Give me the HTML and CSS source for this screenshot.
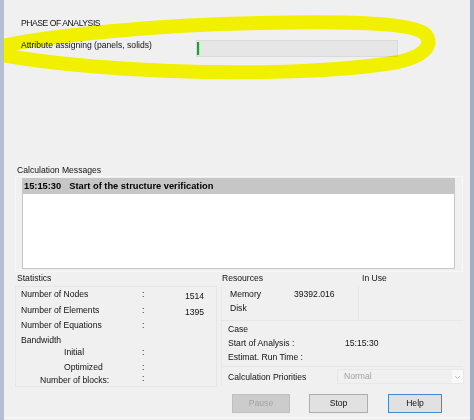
FILE: index.html
```html
<!DOCTYPE html>
<html>
<head>
<meta charset="utf-8">
<link rel="stylesheet" href="styles.css">
</head>
<body>
<div class="window">
  <div class="phase">
    <div class="phase-title">PHASE OF ANALYSIS</div>
    <div class="phase-row">
      <span>Attribute assigning (panels, solids)</span>
      <div class="progress"><div class="progress-fill" style="width:2px"></div></div>
    </div>
  </div>

  <div class="messages">
    <div class="group-label">Calculation Messages</div>
    <div class="msg-frame">
      <div class="listbox">
        <div class="list-item selected"><span>15:15:30</span><span>Start of the structure verification</span></div>
      </div>
    </div>
  </div>

  <div class="bottom">
    <div class="stats">
      <div class="group-label">Statistics</div>
      <div class="stats-panel">
        <div class="stat-row h155"><span>Number of Nodes</span><span>:</span><span class="val">1514</span></div>
        <div class="stat-row h15"><span>Number of Elements</span><span>:</span><span class="val">1395</span></div>
        <div class="stat-row h15"><span>Number of Equations</span><span>:</span><span class="val"></span></div>
        <div class="stat-row h12"><span>Bandwidth</span><span></span><span class="val"></span></div>
        <div class="stat-row h15"><span class="ind2">Initial</span><span>:</span><span class="val"></span></div>
        <div class="stat-row h135"><span class="ind2">Optimized</span><span>:</span><span class="val"></span></div>
        <div class="stat-row"><span class="ind1">Number of blocks:</span><span class="colon-up">:</span><span class="val"></span></div>
      </div>
    </div>

    <div class="right">
      <div class="res-head"><span class="res-title">Resources</span><span class="inuse-title">In Use</span></div>
      <div class="res-row">
        <div class="res-panel">
          <div class="kv mem"><span>Memory</span><span>39392.016</span></div>
          <div class="kv"><span>Disk</span><span></span></div>
        </div>
        <div class="inuse-panel"></div>
      </div>
      <div class="case-panel">
        <div class="case-line">Case</div>
        <div class="case-line case-kv"><span>Start of Analysis :</span><span>15:15:30</span></div>
        <div class="case-line">Estimat. Run Time :</div>
      </div>
      <div class="prio-row">
        <span class="prio-label">Calculation Priorities</span>
        <div class="combo">
          <span class="combo-text">Normal</span>
          <span class="combo-arrow"><svg width="11" height="12" viewBox="0 0 11 12"><polyline points="3,5 5.5,7.5 8,5" fill="none" stroke="#c4c4c4" stroke-width="1"/></svg></span>
        </div>
      </div>
    </div>
  </div>

  <div class="buttons">
    <div class="btn disabled w58">Pause</div>
    <div class="btn w59">Stop</div>
    <div class="btn default w54">Help</div>
  </div>
  <div class="bottom-line"></div>

  <svg class="highlight" width="474" height="100" viewBox="0 0 474 100">
    <path d="M 2,46 C 50,36 150,25 260,23 C 350,21 416,23 426,35 C 434,46 422,57 398,62 C 340,72 250,74 170,71 C 100,68 40,62 2,55" fill="none" stroke="#ffff00" stroke-width="14" stroke-linecap="round" stroke-linejoin="round"/>
  </svg>
</div>
</body>
</html>
```
FILE: styles.css
```css
html, body {
  margin: 0;
  padding: 0;
  background: #f0f0f0;
}
body {
  font-family: "Liberation Sans", Arial, sans-serif;
  font-size: 8.6px;
  line-height: 11px;
  color: #111;
}
.window {
  position: relative;
  width: 474px;
  height: 420px;
  box-sizing: border-box;
  border-left: 4px solid #b3bfd3;
  border-right: 4px solid #a4aec3;
  background: #f0f0f0;
  display: flex;
  flex-direction: column;
  overflow: hidden;
}
.phase {
  padding: 18px 0 0 17px;
}
.phase-title {
  letter-spacing: -0.45px;
}
.phase-row {
  display: grid;
  grid-template-columns: 175px 202px;
  margin-top: 11px;
}
.progress {
  height: 17px;
  box-sizing: border-box;
  background: #e6e6e6;
  border: 1px solid #dadada;
  padding: 1px 0;
  display: flex;
}
.progress-fill {
  background: #06b025;
  height: 100%;
}
.messages {
  margin-top: 108px;
  padding-left: 11px;
}
.group-label {
  padding-left: 2px;
}
.msg-frame {
  width: 448px;
  box-sizing: border-box;
  border: 1px solid #f7f7f7;
  padding: 1px 7px 2px 6px;
}
.listbox {
  height: 91px;
  box-sizing: border-box;
  border: 1px solid #c6c6c6;
  background: #fff;
}
.list-item.selected {
  background: #c6c6c6;
  height: 15px;
  box-sizing: border-box;
  padding: 1px 0 0 1px;
  font-weight: bold;
  font-size: 9.3px;
  line-height: 12px;
  display: flex;
  gap: 8px;
  color: #000;
}
.bottom {
  display: grid;
  grid-template-columns: 202px 242px;
  column-gap: 4px;
  margin: 1px 0 0 11px;
}
.stats-panel {
  margin-top: 2px;
  height: 101px;
  box-sizing: border-box;
  border: 1px solid #e6e6e6;
  padding: 2px 0 0 5px;
}
.stat-row {
  display: grid;
  grid-template-columns: 121px 6px 56px;
  height: 11px;
}
.stat-row.h155 { height: 15.5px; }
.stat-row.h15 { height: 15px; }
.stat-row.h12 { height: 12px; }
.stat-row.h135 { height: 13.5px; }
.stat-row .val {
  text-align: right;
  padding-top: 2px;
}
.ind2 { padding-left: 43px; }
.ind1 { padding-left: 19px; }
.colon-up { margin-top: -2px; }
.res-head {
  display: grid;
  grid-template-columns: 137px 105px;
}
.res-title { padding-left: 1px; }
.inuse-title { padding-left: 4px; }
.res-row {
  display: grid;
  grid-template-columns: 137px 105px;
  height: 34px;
  margin-top: 2px;
}
.res-panel {
  border-left: 1px solid #e6e6e6;
  padding: 3px 0 0 8px;
}
.kv {
  display: grid;
  grid-template-columns: 64px auto;
}
.kv.mem { height: 13.5px; }
.inuse-panel {
  border-left: 1px solid #e6e6e6;
}
.case-panel {
  height: 47px;
  box-sizing: border-box;
  border-top: 1px solid #e6e6e6;
  border-bottom: 1px solid #e6e6e6;
  border-left: 1px solid #e6e6e6;
  padding: 2.5px 0 0 6px;
}
.case-line { height: 14px; }
.case-kv {
  display: grid;
  grid-template-columns: 117px auto;
}
.prio-row {
  display: grid;
  grid-template-columns: 108px 127px;
  padding-left: 7px;
  height: 20px;
  border-left: 1px solid #e6e6e6;
  box-sizing: border-box;
}
.prio-label {
  padding-top: 5px;
  margin-left: -1px;
}
.combo {
  margin-top: 2px;
  height: 15px;
  box-sizing: border-box;
  border: 1px solid #e8e8e8;
  display: flex;
  justify-content: space-between;
  color: #a3a3a3;
}
.combo-text {
  padding: 1px 0 0 6px;
}
.combo-arrow {
  width: 11px;
  background: #f9f9f9;
  display: flex;
  align-items: center;
}
.buttons {
  display: flex;
  margin: 7px 0 0 228px;
  gap: 19px;
}
.btn {
  height: 19px;
  box-sizing: border-box;
  border: 1px solid #adadad;
  background: #e1e1e1;
  text-align: center;
  line-height: 17px;
  color: #111;
}
.btn.w58 { width: 58px; }
.btn.w59 { width: 59px; margin-right: 1px; }
.btn.w54 { width: 54px; }
.btn.disabled {
  background: #cccccc;
  border-color: #bfbfbf;
  color: #a2a2a2;
}
.btn.default {
  border-color: #4688cc;
}
.bottom-line {
  margin-top: auto;
  margin-bottom: 2px;
  height: 1px;
  background: #fafafa;
}
.highlight {
  position: absolute;
  left: -4px;
  top: 0;
  mix-blend-mode: multiply;
  pointer-events: none;
}
```
